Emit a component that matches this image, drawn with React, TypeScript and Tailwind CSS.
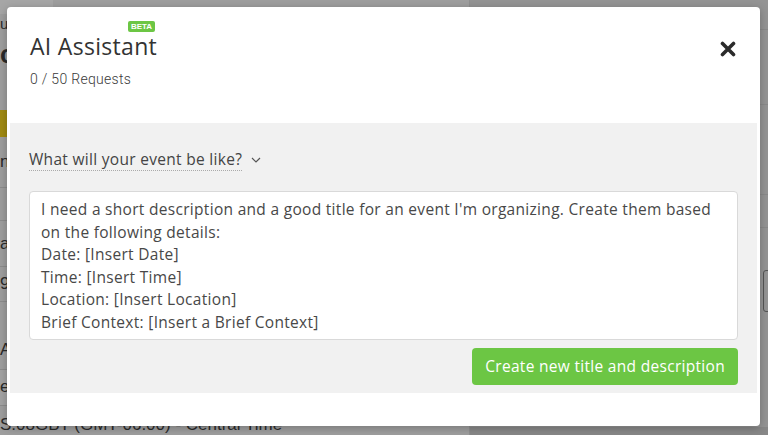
import { useState } from 'react';

const bodyFont = { fontFamily: '"Open Sans", "Noto Sans", sans-serif' };

const promptText = `I need a short description and a good title for an event I'm organizing. Create them based
on the following details:
Date: [Insert Date]
Time: [Insert Time]
Location: [Insert Location]
Brief Context: [Insert a Brief Context]`;

function BackgroundPage() {
  // dimmed page behind the modal, only the edges show
  return (
    <div className="flex h-full w-full text-[#2a2a2a]" style={{ fontFamily: '"Liberation Sans", Arial, sans-serif' }}>
      <div className="flex w-[470px] flex-col border-r border-[#8f8f8f] bg-[#9e9e9e]">
        <div className="h-[14px] w-[53px] bg-[#a6a6a6]" />
        <div className="h-[20px] text-[15px] leading-[20px]">ue</div>
        <div className="h-[40px] text-[26px] font-bold leading-[40px]">co</div>
        <div className="h-[37px]" />
        <div className="h-[28px] w-[60px] bg-[#a08a12]" />
        <div className="h-[52px] border-b border-[#8c8c8c] pt-[12px] text-[17px]">n</div>
        <div className="h-[34px] border-b border-[#8c8c8c]" />
        <div className="h-[46px] border-b border-[#8c8c8c] pt-[10px] text-[17px]">ar</div>
        <div className="h-[36px] border-b border-[#8c8c8c] pt-[4px] text-[17px]">9</div>
        <div className="h-[34px]" />
        <div className="h-[36px] border-b border-[#8c8c8c] pt-[2px] text-[17px]">A</div>
        <div className="h-[36px] border-b border-[#8c8c8c] bg-[#a3a3a3] pt-[4px] text-[17px]">e</div>
        <div className="h-[30px] pt-[9px] text-[17px] leading-[20px] whitespace-nowrap">S:08GBT (GMT-06:00) - Central Time</div>
      </div>
      <div className="flex flex-1 flex-col bg-[#949494]">
        <div className="h-[30px] border-b border-[#8a8a8a]" />
        <div className="h-[75px] border-b border-[#8a8a8a]" />
        <div className="h-[90px] border-b border-[#8a8a8a]" />
        <div className="h-[33px] border-b border-[#8a8a8a]" />
        <div className="flex justify-end pt-[42px]">
          <div className="h-[42px] w-[40px] -mr-[35px] rounded-[3px] border border-[#555]" />
        </div>
        <div className="flex-1" />
        <div className="h-[8px] bg-[#888]" />
      </div>
    </div>
  );
}

function CloseIcon() {
  return (
    <svg width="16" height="16" viewBox="0 0 16 16" fill="none">
      <path d="M2.5 2.5 L13.5 13.5 M13.5 2.5 L2.5 13.5" stroke="#2b2b2b" strokeWidth="3.6" strokeLinecap="round" />
    </svg>
  );
}

function Chevron() {
  return (
    <svg width="10" height="6" viewBox="0 0 10 6" fill="none">
      <path d="M1 1 L5 5 L9 1" stroke="#555" strokeWidth="1.2" />
    </svg>
  );
}

export default function App() {
  const [prompt, setPrompt] = useState(promptText);

  return (
    <div className="relative h-[435px] w-full overflow-hidden bg-[#9a9a9a]">
      <BackgroundPage />

      <div className="absolute inset-0 flex items-start pl-[7px] pt-[7px]">
        <div className="flex h-[419px] w-[753px] flex-col rounded-[4px] bg-white p-[3px] shadow-[0_2px_8px_rgba(0,0,0,0.25)]">
          <div className="flex h-[113px] items-start justify-between px-[20px] pt-[20px]">
            <div className="flex flex-col">
              <div className="relative self-start">
                <h2
                  className="text-[23px] font-normal leading-[32px] text-[#333] tracking-[0.3px]"
                  style={bodyFont}
                >
                  AI Assistant
                </h2>
                <span
                  className="absolute -top-[9px] right-[2px] rounded-[2px] bg-[#6cc644] px-[3px] text-[8px] font-bold leading-[11px] text-white"
                  style={{ fontFamily: '"Liberation Sans", Arial, sans-serif' }}
                >
                  BETA
                </span>
              </div>
              <p
                className="mt-[8px] text-[14px] font-light leading-[18px] tracking-[0.3px] text-[#3a3a3a]"
                style={{ fontFamily: 'Roboto, "Liberation Sans", sans-serif' }}
              >
                0 / 50 Requests
              </p>
            </div>
            <button className="mr-[1px] mt-[11px]" aria-label="Close">
              <CloseIcon />
            </button>
          </div>

          <div className="flex flex-col bg-[#f1f1f1] px-[19px] pb-[8px] pt-[25px]" style={bodyFont}>
            <button className="flex items-center gap-[9px] self-start text-[15.5px] leading-[22px] tracking-[0.3px] text-[#444]">
              <span className="border-b border-dotted border-[#aaa]">What will your event be like?</span>
              <Chevron />
            </button>

            <textarea
              value={prompt}
              onChange={(e) => setPrompt(e.target.value)}
              className="mt-[20px] h-[149px] w-full resize-none rounded-[4px] border border-[#d9d9d9] bg-white px-[11px] pt-[6px] text-[15.5px] leading-[22.5px] tracking-[0.3px] text-[#484848] outline-none whitespace-pre"
              style={bodyFont}
            />

            <div className="mt-[8px] flex justify-end">
              <button className="h-[37px] rounded-[4px] bg-[#6cc644] px-[13px] text-[15.5px] tracking-[0.3px] text-white">
                Create new title and description
              </button>
            </div>
          </div>
        </div>
      </div>
    </div>
  );
}
